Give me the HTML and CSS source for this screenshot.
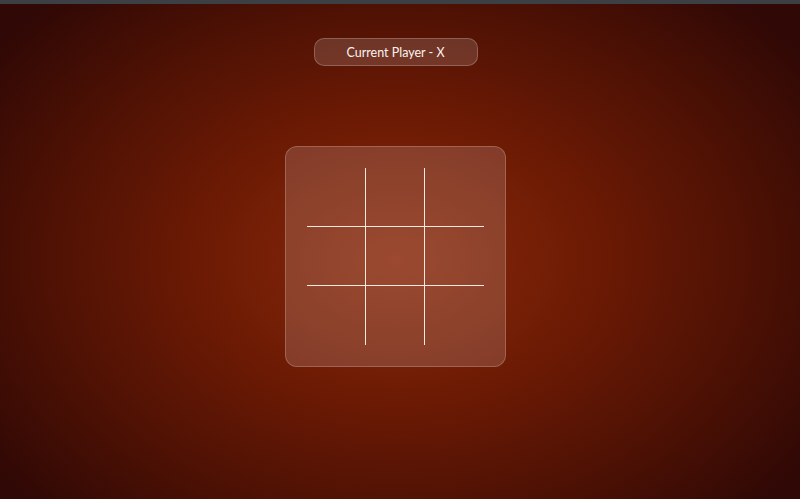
FILE: index.html
```html
<!DOCTYPE html>
<html>
<head>
<meta charset="utf-8">
<link rel="stylesheet" href="styles.css">
</head>
<body>
<div class="topbar"></div>
<main class="app">
  <div class="status">Current Player - X</div>
  <div class="board">
    <div class="grid">
      <div class="cell c1"></div><div class="cell c2"></div><div class="cell c3"></div>
      <div class="cell c4"></div><div class="cell c5"></div><div class="cell c6"></div>
      <div class="cell c7"></div><div class="cell c8"></div><div class="cell c9"></div>
    </div>
  </div>
</main>
</body>
</html>
```
FILE: styles.css
```css
html, body {
  margin: 0;
  padding: 0;
  height: 100%;
}
body {
  background: radial-gradient(ellipse 62% 72% at 49.5% 52%, #8a2a0c 0%, #6c1a04 40%, #4a1004 75%, #300805 100%);
  font-family: "Lato", "Noto Sans", sans-serif;
  overflow: hidden;
}
.topbar {
  height: 4px;
  background: #3c4045;
}
.app {
  width: 791px;
  display: flex;
  flex-direction: column;
  align-items: center;
  padding-top: 34px;
}
.status {
  width: 162px;
  height: 26px;
  border: 1px solid rgba(255, 255, 255, 0.22);
  border-radius: 10px;
  background: rgba(255, 255, 255, 0.14);
  color: #fbf2ee;
  font-size: 12.5px;
  display: flex;
  align-items: center;
  justify-content: center;
}
.board {
  margin-top: 80px;
  width: 177px;
  height: 177px;
  padding: 21px;
  border: 1px solid rgba(255, 255, 255, 0.2);
  border-radius: 12px;
  background: rgba(255, 255, 255, 0.15);
}
.grid {
  display: grid;
  grid-template-columns: 59px 59px 59px;
  grid-template-rows: 59px 59px 59px;
}
.cell {
  box-sizing: border-box;
}
.c1, .c2, .c4, .c5 { border-right: 1px solid #f6e8df; }
.c1, .c2, .c3, .c4, .c5, .c6 { border-bottom: 1px solid #f6e8df; }
.c7, .c8 { border-right: 1px solid #f6e8df; }
.c7, .c8, .c9 { height: 59px; }
```
